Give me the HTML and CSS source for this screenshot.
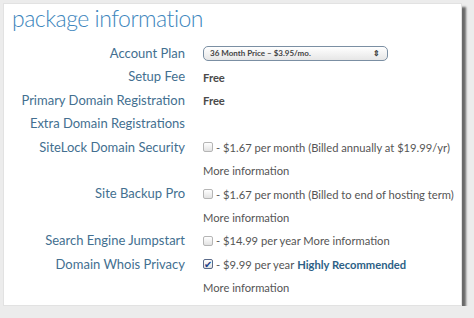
FILE: index.html
```html
<!DOCTYPE html>
<html lang="en">
<head>
    <meta charset="UTF-8">
    <title>Package Information</title>
    <link rel="stylesheet" href="styles.css">
</head>
<body>
    <div class="card">
        <h1 class="title">package information</h1>

        <div class="rows">
            <div class="label">Account Plan</div>
            <div class="value">
                <div class="select">36 Month Price &ndash; $3.95/mo.<span class="arrows">&#8661;</span></div>
            </div>

            <div class="label">Setup Fee</div>
            <div class="value strong">Free</div>

            <div class="label">Primary Domain Registration</div>
            <div class="value strong">Free</div>

            <div class="label">Extra Domain Registrations</div>
            <div class="value"></div>

            <div class="label">SiteLock Domain Security</div>
            <div class="value"><span class="box"></span> - $1.67 per month (Billed annually at $19.99/yr)</div>
            <div class="label"></div>
            <div class="value">More information</div>

            <div class="label">Site Backup Pro</div>
            <div class="value"><span class="box"></span> - $1.67 per month (Billed to end of hosting term)</div>
            <div class="label"></div>
            <div class="value">More information</div>

            <div class="label">Search Engine Jumpstart</div>
            <div class="value"><span class="box"></span> - $14.99 per year More information</div>

            <div class="label">Domain Whois Privacy</div>
            <div class="value"><span class="box checked">&#10004;</span> - $9.99 per year <span class="rec">Highly Recommended</span></div>
            <div class="label"></div>
            <div class="value">More information</div>
        </div>
    </div>
</body>
</html>
```

FILE: styles.css
```css
body { margin: 0; background: #ececec; font-family: Lato, "Open Sans", sans-serif; }

/* white panel with the dark drop shadow */
.card {
    margin: 3px 0 0 3px;
    width: 459px; height: 303px;
    background: #fff;
    border: 1px solid #e2e2e2;
    box-shadow: 4px 4px 2px rgba(0, 0, 0, 0.55);
    box-sizing: border-box;
    padding: 0 0 0 8px;
}

.title { margin: 0; font-size: 23px; font-weight: 300; letter-spacing: -0.5px; color: #3d86bd; line-height: 28px; }

.rows {
    display: grid;
    grid-template-columns: 173px 1fr;
    column-gap: 18px;
    grid-auto-rows: 23.4px;
    margin-top: 10px;
}

.label { text-align: right; font-size: 13px; color: #436f90; line-height: 23px; white-space: nowrap; }
.value { font-size: 11.2px; color: #555; line-height: 23px; white-space: nowrap; display: flex; align-items: center; gap: 3px; }
.value.strong { font-weight: bold; color: #4a4a4a; }

.select {
    width: 177px; height: 13px;
    border: 1px solid #7b8fa3; border-radius: 5px;
    background: linear-gradient(#fff, #e6e6e6);
    font-size: 8px; font-weight: bold; color: #444;
    line-height: 13px; padding-left: 6px;
    position: relative;
}
.arrows { position: absolute; right: 7px; top: 0; font-size: 8px; }

.box {
    display: inline-block; width: 8px; height: 8px;
    border: 1px solid #b5b5b5; border-radius: 2px;
    background: linear-gradient(#fff, #e2e2e2);
    font-size: 10px; line-height: 8px; color: #1d3f8a;
    text-align: center;
}
.box.checked { border-color: #5a6a88; }
.rec { color: #2d5f86; font-weight: bold; }
```
